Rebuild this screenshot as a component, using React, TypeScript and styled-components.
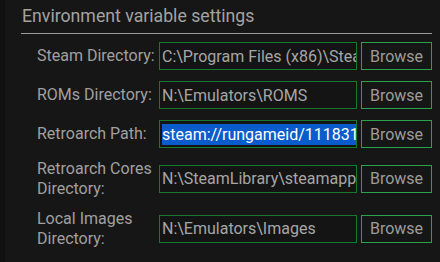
import React from 'react'
import styled, { createGlobalStyle } from 'styled-components'

const GlobalStyle = createGlobalStyle`
    html, body {
        margin: 0;
        padding: 0;
        background: #161616;
    }

    body {
        font-family: Roboto, 'Liberation Sans', sans-serif;
    }
`

const Page = styled.div`
    display: flex;
    width: 440px;
    height: 262px;
    background: #161616;
    overflow: hidden;
`

const Strip = styled.div`
    width: 5px;
    flex-shrink: 0;
    background: #111111;
`

const Panel = styled.div`
    flex: 1;
    padding: 5px 8px 0 16px;
`

const Heading = styled.div`
    font-size: 17.7px;
    line-height: 23px;
    color: #a3a3a3;
    padding: 0 0 5px 1px;
    border-bottom: 1px solid #9a9a9a;
`

const Settings = styled.div`
    display: grid;
    grid-template-columns: 118px 198px 71px;
    column-gap: 4px;
    row-gap: 11px;
    align-items: center;
    margin: 8px 0 0 16px;
`

const Label = styled.label`
    font-size: 16px;
    line-height: 19.5px;
    color: #a0a0a0;
`

const Field = styled.div`
    box-sizing: border-box;
    height: 28px;
    padding: 0 2px;
    display: flex;
    align-items: center;
    border: 1px solid #17792f;
    background: #141414;
    overflow: hidden;
    white-space: nowrap;
`

const FieldText = styled.span<{ $selected?: boolean }>`
    font-size: 16px;
    line-height: 21px;
    color: ${p => (p.$selected ? '#ffffff' : '#a6a6a6')};
    background: ${p => (p.$selected ? '#0a5ccc' : 'transparent')};
`

const BrowseButton = styled.button`
    box-sizing: border-box;
    height: 28px;
    border: 1px solid #2aa24c;
    background: #161616;
    color: #9c9c9c;
    font-family: Roboto, 'Liberation Sans', sans-serif;
    font-size: 16px;
    padding: 0;
    cursor: pointer;
`

const rows = [
    { label: 'Steam Directory:', value: 'C:\\Program Files (x86)\\Steam' },
    { label: 'ROMs Directory:', value: 'N:\\Emulators\\ROMS' },
    { label: 'Retroarch Path:', value: 'steam://rungameid/1118310', selected: true },
    { label: 'Retroarch Cores Directory:', value: 'N:\\SteamLibrary\\steamapps\\common\\RetroArch\\cores' },
    { label: 'Local Images Directory:', value: 'N:\\Emulators\\Images' },
]

export default function App() {
    return (
        <>
            <GlobalStyle />
            <Page>
                <Strip />
                <Panel>
                    <Heading>Environment variable settings</Heading>
                    <Settings>
                        {rows.map(row => (
                            <React.Fragment key={row.label}>
                                <Label>{row.label}</Label>
                                <Field>
                                    <FieldText $selected={row.selected}>{row.value}</FieldText>
                                </Field>
                                <BrowseButton>Browse</BrowseButton>
                            </React.Fragment>
                        ))}
                    </Settings>
                </Panel>
            </Page>
        </>
    )
}
